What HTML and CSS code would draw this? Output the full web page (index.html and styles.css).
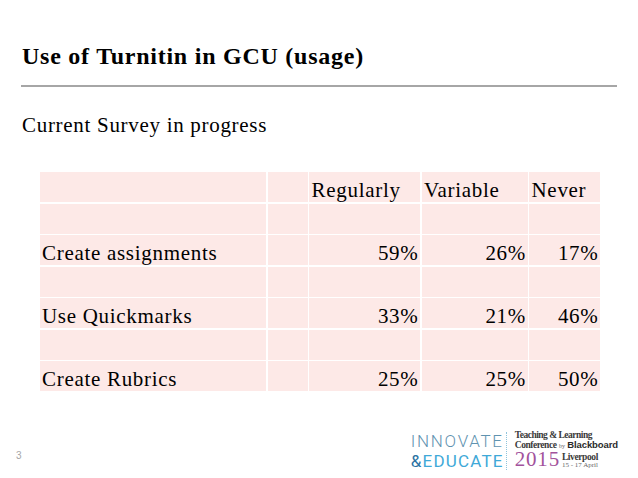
FILE: index.html
```html
<!DOCTYPE html>
<html lang="en">
<head>
<meta charset="utf-8">
<title>Use of Turnitin in GCU (usage)</title>
<link rel="stylesheet" href="styles.css">
</head>
<body>
<div class="slide">
  <h1 class="title">Use of Turnitin in GCU (usage)</h1>
  <div class="rule"></div>
  <p class="subtitle">Current Survey in progress</p>

  <div class="grid">
    <div class="cell"></div><div class="cell"></div><div class="cell head">Regularly</div><div class="cell head">Variable</div><div class="cell head">Never</div>
    <div class="cell"></div><div class="cell"></div><div class="cell"></div><div class="cell"></div><div class="cell"></div>
    <div class="cell label">Create assignments</div><div class="cell"></div><div class="cell num">59%</div><div class="cell num">26%</div><div class="cell num">17%</div>
    <div class="cell"></div><div class="cell"></div><div class="cell"></div><div class="cell"></div><div class="cell"></div>
    <div class="cell label">Use Quickmarks</div><div class="cell"></div><div class="cell num">33%</div><div class="cell num">21%</div><div class="cell num">46%</div>
    <div class="cell"></div><div class="cell"></div><div class="cell"></div><div class="cell"></div><div class="cell"></div>
    <div class="cell label">Create Rubrics</div><div class="cell"></div><div class="cell num">25%</div><div class="cell num">25%</div><div class="cell num">50%</div>
  </div>

  <div class="footer">
    <div class="pagenum">3</div>
    <div class="logo">
      <div class="logo-left">
        <div class="innovate">INNOVATE</div>
        <div class="educate"><span class="amp">&amp;</span>EDUCATE</div>
      </div>
      <div class="divider"></div>
      <div class="logo-right">
        <div class="tl">Teaching &amp; Learning</div>
        <div class="conf"><span class="conf-word">Conference</span> <span class="by">by</span> <span class="bb">Blackboard</span></div>
        <div class="year-row">
          <div class="year">2015</div>
          <div class="place">
            <div class="city">Liverpool</div>
            <div class="dates">15 - 17 April</div>
          </div>
        </div>
      </div>
    </div>
  </div>
</div>
</body>
</html>
```
FILE: styles.css
```css
html, body {
  margin: 0;
  padding: 0;
  background: #ffffff;
}

.slide {
  width: 638px;
  height: 478px;
  box-sizing: border-box;
  padding-top: 42px;
  display: flex;
  flex-direction: column;
  font-family: "Liberation Serif", "Times New Roman", serif;
  color: #000000;
  overflow: hidden;
}

.title {
  margin: 0 0 0 22px;
  font-size: 24px;
  line-height: 28px;
  font-weight: bold;
  letter-spacing: 0.75px;
}

.rule {
  margin: 15px 0 0 21px;
  width: 596px;
  height: 2px;
  background: #a6a6a6;
}

.subtitle {
  margin: 25px 0 0 22px;
  font-size: 21px;
  line-height: 26px;
  letter-spacing: 0.7px;
}

.grid {
  margin: 34px 0 0 40px;
  display: grid;
  grid-template-columns: 226px 40px 111px 106px 71px;
  grid-auto-rows: 30px;
  gap: 1.5px;
  font-size: 21px;
  letter-spacing: 0.7px;
}

.cell {
  background: #fde9e7;
  box-sizing: border-box;
  padding: 6.5px 2px 0 2px;
  line-height: 23.5px;
  white-space: nowrap;
}

.head {
  padding-left: 2.5px;
}

.num {
  text-align: right;
  padding-right: 1.5px;
}

.footer {
  margin-top: 37px;
  height: 50px;
  display: flex;
  align-items: flex-start;
  padding: 0 20px 0 16px;
}

.pagenum {
  margin-top: 21.5px;
  font-family: "Liberation Sans", Arial, sans-serif;
  font-size: 10px;
  line-height: 12px;
  color: #a6a6a6;
}

.logo {
  margin-left: auto;
  display: flex;
  align-items: flex-start;
}

.logo-left {
  margin-top: 3px;
  font-family: Roboto, "Open Sans", "Liberation Sans", sans-serif;
  font-size: 17px;
  line-height: 20px;
  letter-spacing: 1.7px;
}

.innovate {
  font-weight: 300;
  color: #5f93b0;
}

.educate {
  font-weight: 400;
  color: #3fa9d8;
  letter-spacing: 1.2px;
}

.amp {
  color: #2c73a3;
}

.divider {
  margin: 4px 8px 0 2px;
  width: 0;
  height: 38px;
  border-left: 1.5px dotted #8fc4dc;
}

.logo-right {
  margin-top: 2.7px;
  color: #3a3a3a;
  font-weight: bold;
}

.tl {
  font-size: 9.5px;
  line-height: 9.5px;
  letter-spacing: -0.5px;
  white-space: nowrap;
}

.conf {
  font-size: 9.5px;
  line-height: 9.3px;
  white-space: nowrap;
}

.conf-word {
  letter-spacing: -0.45px;
}

.by {
  font-size: 6px;
  font-weight: normal;
  color: #666666;
}

.bb {
  font-family: "Liberation Sans", Arial, sans-serif;
  letter-spacing: -0.1px;
  color: #2b2b2b;
}

.year-row {
  display: flex;
  align-items: flex-start;
}

.year {
  font-size: 21px;
  line-height: 17px;
  font-weight: normal;
  letter-spacing: 0.8px;
  color: #a2529c;
}

.place {
  margin: 2px 0 0 2px;
}

.city {
  font-size: 9.5px;
  line-height: 9px;
  letter-spacing: -0.4px;
}

.dates {
  font-size: 7px;
  line-height: 7px;
  font-weight: normal;
  color: #666666;
}
```
